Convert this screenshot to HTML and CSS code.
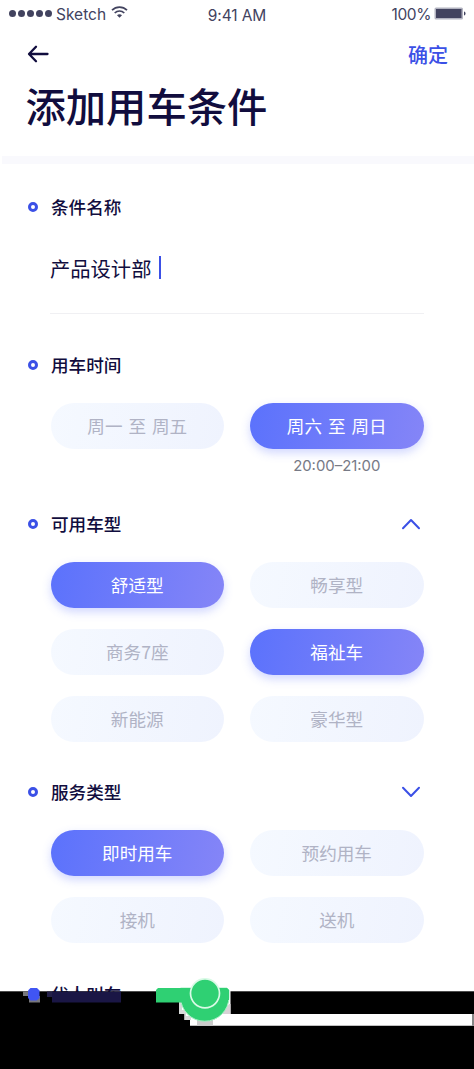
FILE: index.html
```html
<!DOCTYPE html>
<html lang="zh-CN">
<head>
<meta charset="UTF-8" />
<meta name="viewport" content="width=device-width, initial-scale=1" />
<title>添加用车条件</title>
<link rel="stylesheet" href="styles.css">
</head>
<body>
  <div class="screen">
    <header class="header">
      <div class="status-bar">
        <div class="carrier">
          <span class="signal"><i></i><i></i><i></i><i></i><i></i></span>
          <span class="carrier-name">Sketch</span>
          <svg class="wifi" width="17" height="12" viewBox="0 0 17 12" fill="none" stroke="#42435f" stroke-width="1.7">
            <path d="M1 4.2C5.2 0 11.8 0 16 4.2" />
            <path d="M3.7 7C6.4 4.3 10.6 4.3 13.3 7" />
            <path d="M6 9.2C7.4 7.9 9.6 7.9 11 9.2L8.5 11.7Z" fill="#42435f" stroke="none" />
          </svg>
        </div>
        <span class="clock">9:41 AM</span>
        <div class="power">
          <span>100%</span>
          <svg width="32" height="13" viewBox="0 0 32 13">
            <rect x="0.5" y="0.5" width="28.5" height="12" rx="1.5" fill="#b2b3c0" />
            <rect x="2" y="2" width="25.5" height="9" fill="#42435f" />
            <path d="M30 4.5Q31.5 4.7 31.5 6.5T30 8.5Z" fill="#42435f" />
          </svg>
        </div>
      </div>
      <nav class="nav">
        <svg width="22" height="18" viewBox="0 0 22 18" fill="none" stroke="#110d3e" stroke-width="2.3" stroke-linecap="round" stroke-linejoin="round">
          <path d="M20.5 9H2.5M9 1.8L2 9L9 16.2" />
        </svg>
        <a class="confirm">确定</a>
      </nav>
      <h1>添加用车条件</h1>
    </header>

    <main class="form">
      <section class="group group-name">
        <h2 class="label">条件名称</h2>
        <div class="field"><span>产品设计部</span><i class="caret"></i></div>
      </section>

      <section class="group group-time">
        <h2 class="label">用车时间</h2>
        <div class="options">
          <div class="pill">周一 至 周五</div>
          <div class="pill active">周六 至 周日</div>
        </div>
        <p class="hours">20:00–21:00</p>
      </section>

      <section class="group group-car">
        <h2 class="label">可用车型
          <svg class="chevron" width="20" height="12" viewBox="0 0 20 12"><path d="M2 10.2L10 2L18 10.2" /></svg>
        </h2>
        <div class="options">
          <div class="pill active">舒适型</div>
          <div class="pill">畅享型</div>
          <div class="pill">商务7座</div>
          <div class="pill active">福祉车</div>
          <div class="pill">新能源</div>
          <div class="pill">豪华型</div>
        </div>
      </section>

      <section class="group group-service">
        <h2 class="label">服务类型
          <svg class="chevron" width="20" height="12" viewBox="0 0 20 12"><path d="M2 1.8L10 10L18 1.8" /></svg>
        </h2>
        <div class="options">
          <div class="pill active">即时用车</div>
          <div class="pill">预约用车</div>
          <div class="pill">接机</div>
          <div class="pill">送机</div>
        </div>
      </section>

      <section class="group group-proxy">
        <h2 class="label">代人叫车</h2>
      </section>
    </main>

    <!-- black bottom strip with the cut-off row and the green switch -->
    <svg class="bottom" width="474" height="93" viewBox="0 976 474 93">
      <rect x="0" y="991.3" width="474" height="78" fill="#000" />
      <path d="M23 991.5H29V996H40V1002.5H29V996H23Z" fill="#77777c" />
      <path d="M28 990.5L30.5 988H37L39.5 990.5V998L36.5 1000.5H30.5L28 998Z" fill="#4055f3" />
      <rect x="47" y="991.5" width="6" height="5.5" fill="#242048" />
      <rect x="52" y="991.5" width="69" height="11" fill="#1a1645" />
      <path d="M179 991H230.5V1014H474V1025.7H190V1020H184.5V1014H179Z" fill="#fff" />
      <path d="M179 1002H182V1010H186V1016H191V1020H184.5V1014H179Z" fill="#d6d9d8" />
      <path d="M229 1004H230.5V1014H222Z" fill="#d8d2d6" />
      <rect x="197" y="1020" width="16" height="5.5" fill="#ccc" />
      <rect x="472" y="1014" width="2" height="11.7" fill="#888" />
      <path d="M180.5 997A24 24 0 0 0 229 997V990L227 988H180.5Z" fill="#2fd073" stroke="#a8efc5" stroke-width="1" />
      <path d="M156 990L158 988H227L229 990V1000H182V1002.5H156Z" fill="#2fd073" />
      <circle cx="205" cy="993.3" r="14.5" fill="#2fd073" stroke="#d9fae6" stroke-width="1.7" />
    </svg>
  </div>
</body>
</html>
```
FILE: styles.css
```css
:root {
  --ink: #110d3e;
  --blue: #3b50e6;
  --status: #42435f;
  --muted: #b0b3c5;
  --cjk: "Noto Sans CJK SC", sans-serif;
}
*,
*::before {
  box-sizing: border-box;
}
body {
  margin: 0;
  background: #fff;
  font-family: var(--cjk);
  color: var(--ink);
}
.screen {
  position: relative;
  width: 474px;
  height: 1069px;
  overflow: hidden;
}
.header {
  height: 156px;
}
.status-bar {
  display: grid;
  grid-template-columns: 1fr auto 1fr;
  align-items: center;
  height: 28px;
  padding: 0 8px 0 9px;
  font-family: Inter, sans-serif;
  font-size: 15.5px;
  color: var(--status);
}
.carrier,
.power,
.signal {
  display: flex;
  align-items: center;
}
.signal {
  gap: 2px;
  margin-top: -2px;
}
.signal i {
  width: 7px;
  height: 7px;
  border-radius: 50%;
  background: var(--status);
}
.carrier-name {
  margin-left: 4px;
}
.wifi {
  margin: -4px 0 0 5px;
}
.clock {
  margin-top: 2px;
  margin-left: -1px;
  letter-spacing: -0.1px;
}
.power {
  justify-content: flex-end;
  gap: 3px;
  letter-spacing: -0.4px;
}
.power svg {
  margin-top: -2px;
}
.nav {
  display: flex;
  justify-content: space-between;
  align-items: center;
  height: 50px;
  padding: 2px 26px 0 27px;
}
.confirm {
  font-size: 20px;
  font-weight: 500;
  color: var(--blue);
}
h1 {
  margin: 0;
  padding-left: 25.5px;
  font-size: 40.3px;
  font-weight: 500;
  line-height: 54px;
}
.form {
  margin-left: 2px;
  padding: 31px 50px 0 26px;
  border-top: 8px solid #f9f9fd;
}
.label {
  display: flex;
  align-items: center;
  height: 24px;
  margin: 0;
  font-size: 17.6px;
  font-weight: 500;
  line-height: 24px;
}
.label::before {
  content: "";
  width: 10px;
  height: 10px;
  margin-right: 13px;
  border: 3px solid var(--blue);
  border-radius: 50%;
}
.chevron {
  margin: 0 3px 0 auto;
  fill: none;
  stroke: var(--blue);
  stroke-width: 2;
  stroke-linecap: round;
  stroke-linejoin: round;
}
.group-name {
  height: 158px;
}
.group-time {
  height: 159px;
}
.group-car {
  height: 268px;
}
.group-service {
  height: 202px;
}
.field {
  display: flex;
  align-items: center;
  height: 95px;
  margin-left: 22px;
  padding-top: 3px;
  border-bottom: 1px solid #f0f0f3;
  font-size: 20.3px;
}
.caret {
  width: 2.5px;
  height: 23px;
  margin-left: 7.5px;
  background: var(--blue);
}
.options {
  display: grid;
  grid-template-columns: 173.5px 173.5px;
  gap: 21.5px 26px;
  margin: 26px 0 0 22.5px;
}
.pill {
  height: 45.5px;
  border-radius: 23px;
  background: linear-gradient(100deg, #f5f9ff, #eff3fe);
  font-size: 17.6px;
  line-height: 45px;
  text-align: center;
  word-spacing: 2px;
  color: var(--muted);
}
.pill.active {
  background: linear-gradient(100deg, #5b72fc, #8585f7);
  box-shadow: 0 4px 10px rgba(91, 110, 250, 0.28);
  color: #fff;
}
.hours {
  width: 173.5px;
  margin: 6px 0 0 222px;
  font-family: Inter, sans-serif;
  font-size: 14.9px;
  line-height: 22px;
  text-align: center;
  color: #777a86;
}
.bottom {
  position: absolute;
  left: 0;
  top: 976px;
}
```
